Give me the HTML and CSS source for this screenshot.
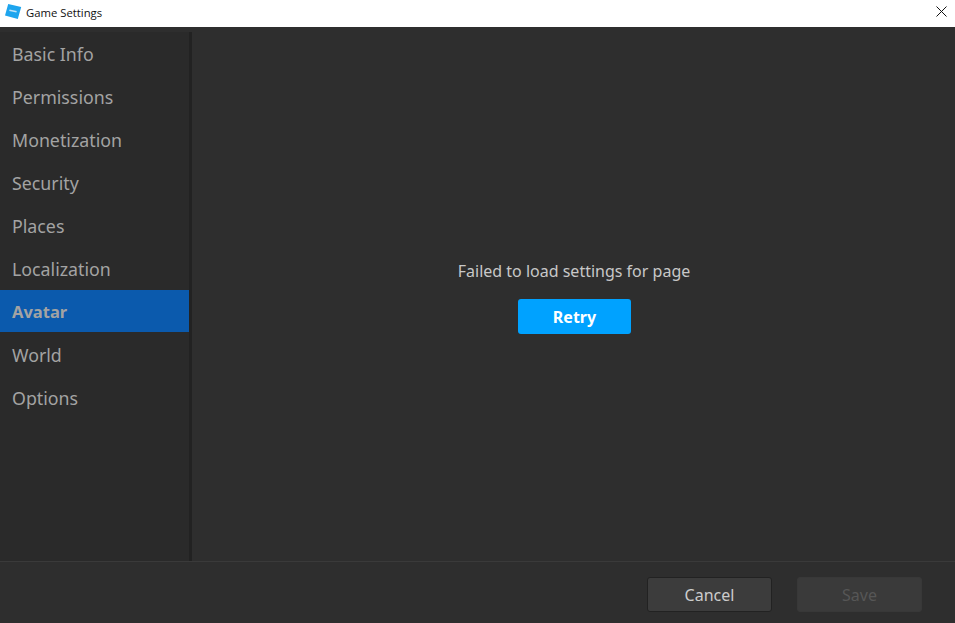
FILE: index.html
```html
<!DOCTYPE html>
<html lang="en">
<head>
<meta charset="utf-8">
<title>Game Settings</title>
<link rel="stylesheet" href="styles.css">
</head>
<body>
<div class="window">
  <header class="titlebar">
    <div class="title-group">
      <svg class="logo" width="17" height="16" viewBox="0 0 17 16"><polygon points="3.2,0 16.2,3 12.8,15 0,11.6" fill="#1ea5ee"/><polygon points="4.6,5.6 11.8,7 11.4,8.4 4.2,7" fill="#bfe4f9"/></svg>
      <span class="title">Game Settings</span>
    </div>
    <svg class="close" width="11" height="11" viewBox="0 0 11 11"><path d="M.5.5l10 10M10.5.5l-10 10" stroke="#111" stroke-width="1" fill="none"/></svg>
  </header>
  <div class="main">
    <nav class="sidebar">
      <div class="nav-item">Basic Info</div>
      <div class="nav-item">Permissions</div>
      <div class="nav-item">Monetization</div>
      <div class="nav-item">Security</div>
      <div class="nav-item">Places</div>
      <div class="nav-item">Localization</div>
      <div class="nav-item active">Avatar</div>
      <div class="nav-item">World</div>
      <div class="nav-item">Options</div>
    </nav>
    <section class="content">
      <p class="message">Failed to load settings for page</p>
      <button class="retry">Retry</button>
    </section>
  </div>
  <footer class="footer">
    <button class="btn cancel">Cancel</button>
    <button class="btn save">Save</button>
  </footer>
</div>
</body>
</html>
```
FILE: styles.css
```css
* { box-sizing: border-box; }
html, body { margin: 0; height: 100%; }
body { font-family: "Noto Sans", "Open Sans", sans-serif; background: #2e2e2e; overflow: hidden; }
.window { width: 955px; height: 623px; display: flex; flex-direction: column; }
.titlebar { height: 27px; background: #fff; display: flex; align-items: center; justify-content: space-between; padding: 0 8px 0 5px; }
.title-group { display: flex; align-items: center; gap: 4px; }
.logo { display: block; margin-top: -3px; }
.title { font-size: 11.3px; color: #111; margin-top: -3px; font-family: "Open Sans", sans-serif; }
.close { display: block; margin-top: -4px; }
.main { height: 535px; padding-top: 5px; display: flex; border-bottom: 1px solid #3a3a3a; }
.sidebar { width: 192px; background: #2a2a2a; border-right: 3px solid #222; display: flex; flex-direction: column; gap: 1px; }
.nav-item { height: 42px; line-height: 45px; padding-left: 12px; font-size: 17.8px; color: #a3a3a3; }
.nav-item.active { background: #0b5aad; font-weight: 700; font-size: 16.5px; line-height: 43px; }
.content { flex: 1; display: flex; flex-direction: column; align-items: center; padding: 227px 0 0 2px; }
.message { margin: 0 1px 0 0; font-size: 16px; line-height: 24px; color: #c8c8c8; }
.retry { margin-top: 16px; width: 113px; height: 35px; border: 0; border-radius: 3px; background: #00a2ff; color: #fff; font: 700 16px "Noto Sans", sans-serif; }
.footer { flex: 1; display: flex; justify-content: flex-end; align-items: flex-start; gap: 25px; padding: 15px 33px 0 0; }
.btn { width: 125px; height: 35px; border-radius: 3px; font: 16px "Noto Sans", sans-serif; }
.cancel { background: #3c3c3c; border: 1px solid #222; color: #ccc; }
.save { background: #3a3a3a; border: 1px solid #383838; color: #565656; }
```
